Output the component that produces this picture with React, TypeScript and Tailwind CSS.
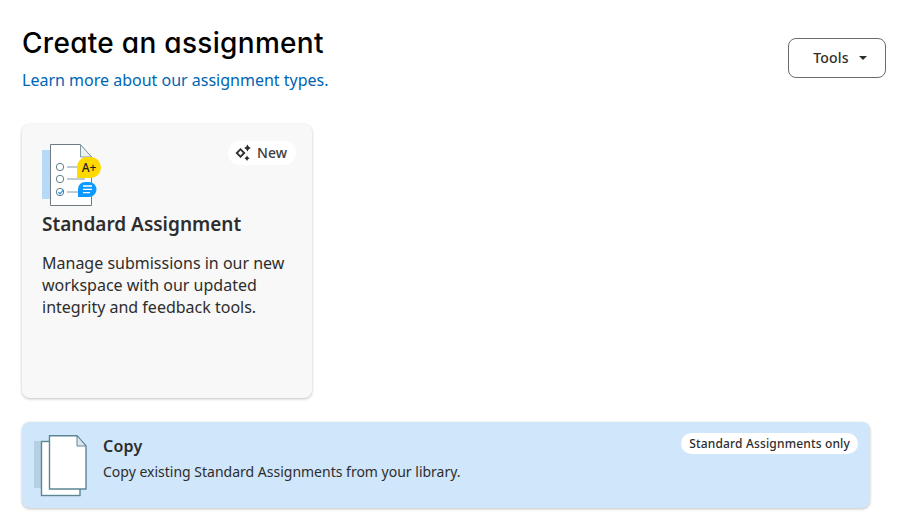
const body = { fontFamily: '"Noto Sans", sans-serif' };

const AssignmentIcon = () => (
  <svg width="60" height="64" viewBox="0 0 60 64" fill="none">
    <rect x="0" y="6" width="8" height="49" fill="#b5d9f7" />
    <path d="M8.5 0.5H38L49.5 13V61.5H8.5Z" fill="#fff" stroke="#6f7b80" strokeWidth="1" />
    <path d="M38.5 0.5V13H49.5Z" fill="#f1f1f1" stroke="#7f9aa3" strokeWidth="1" />
    <circle cx="18" cy="23" r="3.7" fill="#fff" stroke="#5f7f88" />
    <circle cx="18" cy="35" r="3.7" fill="#fff" stroke="#5f7f88" />
    <circle cx="18" cy="48" r="3.7" fill="#fff" stroke="#5f7f88" />
    <path d="M16.5 48l1.5 1.8 3.5-4" stroke="#1e90e6" strokeWidth="1.2" />
    <path d="M25 23H36M25 35H43M25 48H37" stroke="#7f9aa3" strokeWidth="1" />
    <path d="M35 34V23a10 10 0 0 1 10-10h3.5a10.5 10.5 0 0 1 0 21Z" fill="#ffd900" />
    <text x="47" y="28" fontSize="12" fontWeight="500" fill="#222" textAnchor="middle" style={body}>A+</text>
    <path d="M36 53V45a7 7 0 0 1 7-7h4a7.5 7.5 0 0 1 0 15Z" fill="#0d99ff" />
    <path d="M41 42H50M41 45.3H50M41 48.6H48" stroke="#fff" strokeWidth="1.3" />
  </svg>
);

const CopyIcon = () => (
  <svg width="54" height="62" viewBox="0 0 54 62" fill="none">
    <rect x="0" y="6" width="7" height="47" fill="#b4d0e2" />
    <rect x="7.5" y="6.5" width="38.5" height="54" fill="#fff" stroke="#5b8794" strokeWidth="1.4" />
    <path d="M15.5 0.7H43L52 11V54H15.5Z" fill="#fff" stroke="#5b8794" strokeWidth="1.4" />
    <path d="M43 0.7V11H52Z" fill="#d9e8ef" stroke="#5b8794" strokeWidth="1" />
  </svg>
);

const Sparkle = () => (
  <svg width="18" height="18" viewBox="0 0 18 18" fill="#2d2d2d">
    <path fillRule="evenodd" d="M6.5 4 11.5 9l-5 5-5-5Zm0 2.6L4.1 9l2.4 2.4L8.9 9Z" />
    <path d="M13.5 0.5 14.8 2.7 16.8 4l-2 1.3-1.3 2.2-1.3-2.2-2-1.3 2-1.3Z" />
    <path d="M13 11.5l1 1.7 1.6 1-1.6 1-1 1.8-1-1.8-1.6-1 1.6-1Z" />
  </svg>
);

export default function App() {
  return (
    <div className="bg-white h-[532px] w-[901px] overflow-hidden pt-[25px] pl-[22px] pr-[15px] text-[#2d2d2d]" style={body}>
      <div className="flex justify-between items-start">
        <div>
          <h1
            className="text-[28px] leading-9 font-[550] text-black tracking-[0.3px] [font-feature-settings:'cv11']"
            style={{ fontFamily: 'Inter, sans-serif' }}
          >
            Create an assignment
          </h1>
          <a className="block mt-[7px] text-base leading-6 text-[#0065b3]">Learn more about our assignment types.</a>
        </div>
        <button className="mt-[13px] w-[98px] h-10 flex items-center justify-center gap-[10px] pl-[6px] border border-[#6b6b6b] rounded-lg text-sm font-medium tracking-[0.2px] text-[#2d2d2d]">
          Tools
          <span className="w-0 h-0 border-x-4 border-x-transparent border-t-4 border-t-[#2d2d2d]" />
        </button>
      </div>

      <div className="mt-[32px] relative w-[290px] h-[274px] rounded-lg bg-[#f8f8f8] shadow-[0_1px_3px_rgba(0,0,0,0.25)] pt-5 px-5">
        <span className="absolute top-[17px] right-[16px] flex items-center gap-[5px] h-6 pl-[6px] pr-[9px] rounded-full bg-white text-sm font-medium text-[#3d3d3d]">
          <Sparkle />
          New
        </span>
        <AssignmentIcon />
        <h2 className="mt-[2px] text-[19px] leading-7 font-semibold">Standard Assignment</h2>
        <p className="mt-[14px] text-base leading-[22px] w-[260px]">
          Manage submissions in our new workspace with our updated integrity and feedback tools.
        </p>
      </div>

      <div className="mt-6 relative w-[848px] h-[86px] rounded-lg bg-[#d0e6fa] shadow-[0_1px_3px_rgba(0,0,0,0.25)] flex items-start pl-3 pt-[13px] gap-[15px]">
        <CopyIcon />
        <div>
          <h3 className="text-base leading-6 font-semibold -mt-[1px] tracking-[0.2px]">Copy</h3>
          <p className="mt-[4px] text-sm leading-5">Copy existing Standard Assignments from your library.</p>
        </div>
        <span className="absolute top-[11px] right-3 h-[21px] flex items-center px-2 rounded-full bg-white text-xs font-medium tracking-[0.16px] text-[#2d2d2d]">
          Standard Assignments only
        </span>
      </div>
    </div>
  );
}
